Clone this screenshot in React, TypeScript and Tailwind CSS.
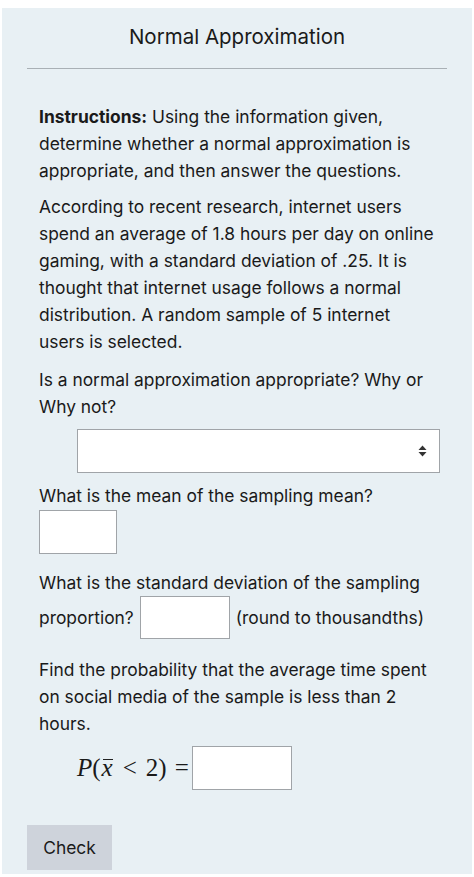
import React from 'react';

const font = { fontFamily: 'Inter, "Noto Sans", sans-serif' };
const serif = { fontFamily: '"Liberation Serif", "DejaVu Serif", serif' };

export default function App() {
  return (
    <div className="min-h-[877px] bg-white pt-2 pl-[2px] pr-[2px]">
      <div
        className="bg-[#e8f0f4] text-[17.4px] leading-[27px] text-[#1a1a1a] h-[866px] flex flex-col"
        style={font}
      >
        <h1 className="text-center text-[20.5px] font-normal pt-[16px] leading-[26px]">Normal Approximation</h1>
        <div className="mx-[25px] mt-[18px] h-px bg-[#a9b0b5]" />
        <div className="px-[37px] pt-[34px]">
          <p>
            <b>Instructions:</b> Using the information given, determine whether a normal
            approximation is appropriate, and then answer the questions.
          </p>
          <p className="mt-[9px]">
            According to recent research, internet users spend an average of 1.8 hours per day on
            online gaming, with a standard deviation of .25. It is thought that internet usage
            follows a normal distribution. A random sample of 5 internet users is selected.
          </p>
          <p className="mt-[11px]">Is a normal approximation appropriate? Why or Why not?</p>
          <div className="mt-[9px] ml-[38px] w-[363px] h-[44px] bg-white border border-[#a0a4a8] flex items-center justify-end pr-[12px]">
            <svg width="9" height="12" viewBox="0 0 9 12">
              <path d="M4.5 0.5 L8.5 5 L0.5 5 Z" fill="#333" />
              <path d="M4.5 11.5 L8.5 7 L0.5 7 Z" fill="#333" />
            </svg>
          </div>
          <p className="mt-[9px]">What is the mean of the sampling mean?</p>
          <div className="mt-[1px] w-[78px] h-[44px] bg-white border border-[#a0a4a8]" />
          <p className="mt-[15px]">What is the standard deviation of the sampling</p>
          <div className="flex items-center mt-0">
            <span>proportion?</span>
            <div className="ml-[6px] mr-[6px] w-[90px] h-[43px] bg-white border border-[#a0a4a8]" />
            <span>(round to thousandths)</span>
          </div>
          <p className="mt-[17px]">
            Find the probability that the average time spent on social media of the sample is less
            than 2 hours.
          </p>
          <div className="flex items-center mt-[9px] ml-[38px]">
            <span className="text-[25px] leading-[30px] whitespace-nowrap" style={serif}>
              <i>P</i>(
              <i className="relative inline-block px-[1px]">
                <span className="absolute left-[2px] right-[1px] top-[6px] h-px bg-[#222]" />
                x
              </i>
              <span className="mx-[9px]">&lt;</span>2)
              <span className="ml-[8px]">=</span>
            </span>
            <div className="ml-[3px] w-[100px] h-[44px] bg-white border border-[#a0a4a8]" />
          </div>
        </div>
        <div className="px-[25px] mt-[35px]">
          <button className="w-[85px] h-[45px] bg-[#ced3db] text-[17.4px] text-[#1a1a1a]">Check</button>
        </div>
      </div>
    </div>
  );
}
